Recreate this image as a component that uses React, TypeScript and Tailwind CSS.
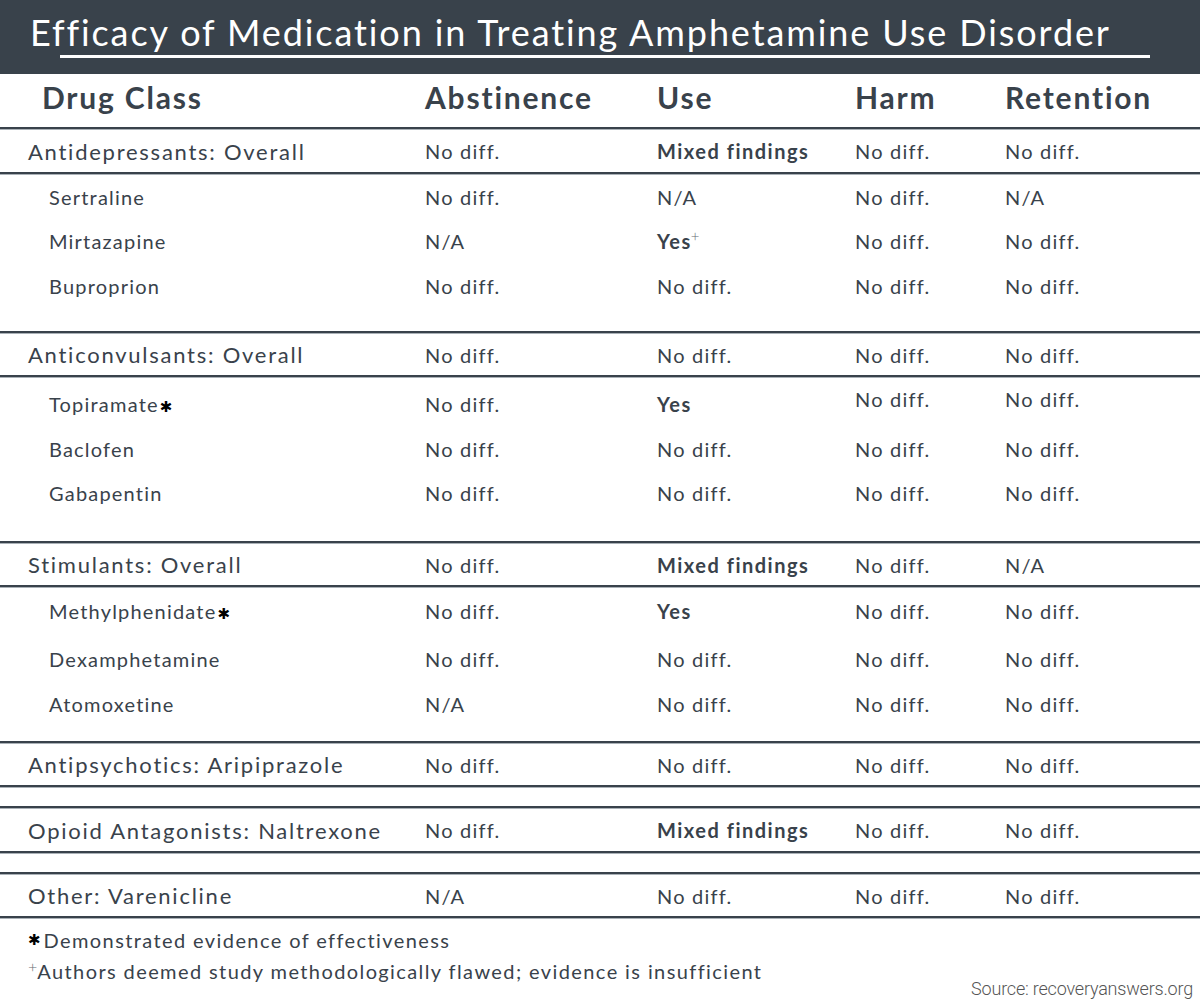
import React from "react";

const ink = "text-[#39424b]";

type Cell = { t: string; bold?: boolean; plus?: boolean; up?: boolean };

const nd: Cell = { t: "No diff." };
const na: Cell = { t: "N/A" };
const mixed: Cell = { t: "Mixed findings", bold: true };
const yes: Cell = { t: "Yes", bold: true };

function Line() {
  return <div className="h-[3px] border-t-2 border-[#39424b] bg-[#aab1b7]" />;
}

function Star() {
  return <span className="text-black text-[15px] font-['DejaVu_Sans',sans-serif] ml-[1px] tracking-normal">✱</span>;
}

function Value({ c }: { c: Cell }) {
  return (
    <div className={`${c.up ? "mb-[10px]" : ""}`}>
      {c.bold ? (
        <span className="text-[20px] font-bold tracking-[1.5px]">{c.t}</span>
      ) : (
        <span className="text-[20px] tracking-[1.2px]">{c.t}</span>
      )}
      {c.plus && <sup className="text-[15px] font-light text-[#666c72] -ml-[1px]">+</sup>}
    </div>
  );
}

function MainRow({ label, cells, h = 41 }: { label: string; cells: Cell[]; h?: number }) {
  return (
    <div className="grid grid-cols-[425px_232px_198px_150px_1fr] items-center" style={{ height: h }}>
      <div className="pl-[28px] text-[22px] tracking-[1.75px] whitespace-nowrap">{label}</div>
      {cells.map((c, i) => (
        <Value key={i} c={c} />
      ))}
    </div>
  );
}

function SubRow({ label, star, cells, h }: { label: string; star?: boolean; cells: Cell[]; h: number }) {
  return (
    <div className="grid grid-cols-[425px_232px_198px_150px_1fr] items-center" style={{ height: h }}>
      <div className="pl-[49px] text-[20px] tracking-[1.2px]">
        {label}
        {star && <Star />}
      </div>
      {cells.map((c, i) => (
        <Value key={i} c={c} />
      ))}
    </div>
  );
}

export default function App() {
  return (
    <div className={`w-[1200px] h-[1000px] bg-white ${ink} font-['Lato',sans-serif] overflow-hidden`}>
      <div className="h-[74px] bg-[#39424b] pt-[10px]">
        <h1 className="pl-[30px] text-[36px] leading-[44px] text-white tracking-[1.9px] whitespace-nowrap">
          Efficacy of Medication in Treating Amphetamine Use Disorder
        </h1>
        <div className="ml-[60px] mt-[1px] w-[1090px] h-[3px] bg-white" />
      </div>

      <div className="grid grid-cols-[425px_232px_198px_150px_1fr] items-center h-[53px] text-[30px] font-bold tracking-[1.8px] pb-[6px]">
        <div className="pl-[42px]">Drug Class</div>
        <div>Abstinence</div>
        <div>Use</div>
        <div>Harm</div>
        <div>Retention</div>
      </div>
      <Line />

      <MainRow label="Antidepressants: Overall" cells={[nd, mixed, nd, nd]} h={42} />
      <Line />
      <div className="pb-[23px]">
        <SubRow label="Sertraline" cells={[nd, na, nd, na]} h={44} />
        <SubRow label="Mirtazapine" cells={[na, { t: "Yes", bold: true, plus: true }, nd, nd]} h={44} />
        <SubRow label="Buproprion" cells={[nd, nd, nd, nd]} h={45} />
      </div>
      <Line />

      <MainRow label="Anticonvulsants: Overall" cells={[nd, nd, nd, nd]} h={41} />
      <Line />
      <div className="pt-[4px] pb-[27px]">
        <SubRow label="Topiramate" star cells={[nd, yes, { t: "No diff.", up: true }, { t: "No diff.", up: true }]} h={44} />
        <SubRow label="Baclofen" cells={[nd, nd, nd, nd]} h={46} />
        <SubRow label="Gabapentin" cells={[nd, nd, nd, nd]} h={42} />
      </div>
      <Line />

      <MainRow label="Stimulants: Overall" cells={[nd, mixed, nd, na]} h={41} />
      <Line />
      <div className="pb-[17px]">
        <SubRow label="Methylphenidate" star cells={[nd, yes, nd, nd]} h={46} />
        <SubRow label="Dexamphetamine" cells={[nd, nd, nd, nd]} h={50} />
        <SubRow label="Atomoxetine" cells={[na, nd, nd, nd]} h={40} />
      </div>
      <Line />

      <MainRow label="Antipsychotics: Aripiprazole" cells={[nd, nd, nd, nd]} h={41} />
      <Line />
      <div className="h-[18px]" />
      <Line />
      <MainRow label="Opioid Antagonists: Naltrexone" cells={[nd, mixed, nd, nd]} h={42} />
      <Line />
      <div className="h-[18px]" />
      <Line />
      <MainRow label="Other: Varenicline" cells={[na, nd, nd, nd]} h={41} />
      <Line />

      <div className="pl-[28px] pt-[6px] text-[20px] tracking-[1.4px]">
        <div className="h-[30px] flex items-center">
          <span className="text-black text-[15px] font-['DejaVu_Sans',sans-serif] mr-[3px] tracking-normal">✱</span>
          Demonstrated evidence of effectiveness
        </div>
        <div className="flex items-end justify-between pr-[7px]">
          <div className="h-[32px] flex items-center">
            <span className="text-[16px] font-light text-[#666c72] -mt-[8px] tracking-normal">+</span>
            Authors deemed study methodologically flawed; evidence is insufficient
          </div>
          <div className="text-[18px] font-['Roboto',sans-serif] font-light text-[#555] -mb-[15px] tracking-[-0.2px]">
            Source: recoveryanswers.org
          </div>
        </div>
      </div>
    </div>
  );
}
